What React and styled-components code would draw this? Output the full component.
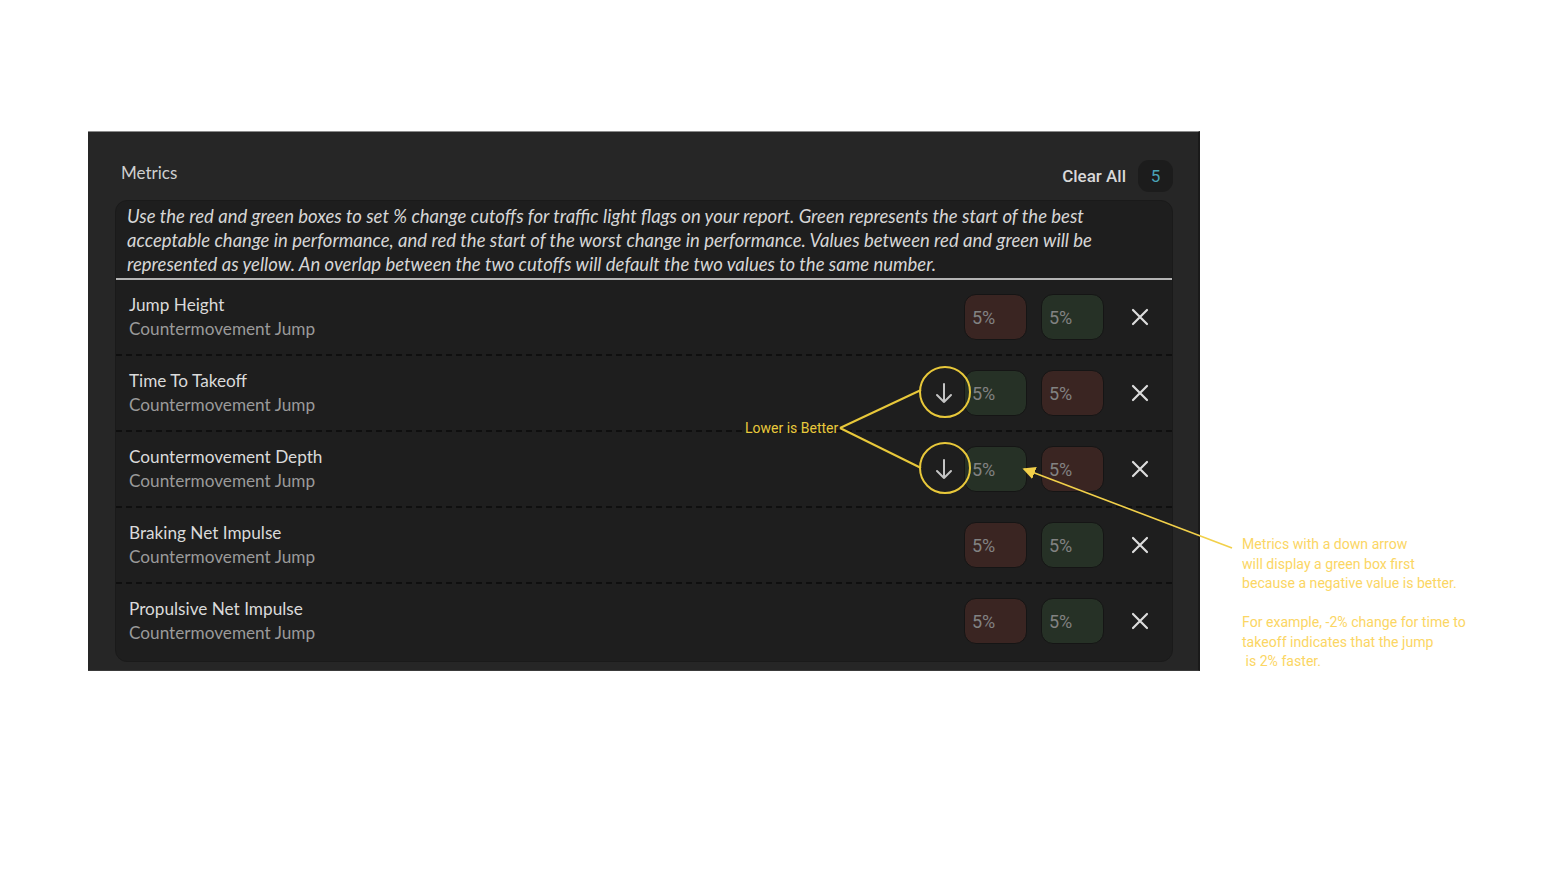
import styled, { createGlobalStyle } from "styled-components";

const GlobalStyle = createGlobalStyle`
  * { box-sizing: border-box; }
  body {
    margin: 0;
    background: #ffffff;
    font-family: Lato, "Open Sans", sans-serif;
  }
`;

const Page = styled.div`
  position: relative;
  width: 1560px;
  height: 877px;
  padding: 131px 0 0 88px;
  background: #ffffff;
  overflow: hidden;
`;

const Panel = styled.section`
  width: 1112px;
  background: #262626;
  border-top: 1px solid #8a8a8a;
  border-right: 2px solid #1a1a1a;
  border-bottom: 1px solid #3a3a3a;
  padding: 0 25px 8px 27px;
`;

const Header = styled.div`
  display: flex;
  align-items: flex-start;
  justify-content: space-between;
  padding-top: 28px;
  margin-bottom: 8px;
`;

const Title = styled.h2`
  margin: 1px 0 0 6px;
  font-size: 17px;
  line-height: 24px;
  font-weight: 400;
  color: #cfcfcf;
`;

const HeaderActions = styled.div`
  display: flex;
  align-items: center;
  gap: 12px;
`;

const ClearButton = styled.button`
  border: none;
  background: none;
  padding: 0;
  font-family: Roboto, "Liberation Sans", sans-serif;
  font-size: 17px;
  font-weight: 500;
  line-height: 32px;
  color: #d8d8d8;
  cursor: pointer;
`;

const Badge = styled.span`
  display: flex;
  align-items: center;
  justify-content: center;
  width: 35px;
  height: 32px;
  border-radius: 11px;
  background: #1c1c1c;
  font-family: Roboto, "Liberation Sans", sans-serif;
  font-size: 17px;
  color: #4aa3b5;
`;

const Card = styled.div`
  background: #1e1e1e;
  border: 1px solid #1a1a1a;
  border-radius: 12px;
  padding-bottom: 3px;
  overflow: hidden;
`;

const Description = styled.p`
  margin: 0;
  padding: 3px 12px 2px 11px;
  border-bottom: 2px solid #b4b4b4;
  font-size: 18.5px;
  line-height: 24px;
  font-style: italic;
  color: #d6d6d6;
  white-space: nowrap;
`;

const Row = styled.div`
  display: flex;
  align-items: center;
  height: ${(p) => (p.$first ? "74px" : "76px")};
  padding: 0 22px 0 13px;
  border-top: ${(p) => (p.$first ? "none" : "2px dashed #0f0f0f")};
`;

const Names = styled.div`
  flex: 1;
  display: flex;
  flex-direction: column;
`;

const MetricName = styled.span`
  font-size: 17.2px;
  line-height: 24px;
  color: #dadada;
`;

const TestName = styled.span`
  font-size: 17.2px;
  line-height: 24px;
  color: #9a9a9a;
`;

const ArrowSlot = styled.div`
  display: flex;
  align-items: center;
  justify-content: center;
  width: 40px;
  height: 46px;
  color: #c4c4c4;
`;

const Cutoff = styled.div`
  display: flex;
  align-items: center;
  width: 63px;
  height: 46px;
  margin-left: ${(p) => (p.$second ? "14px" : "0")};
  padding-left: 7px;
  border-radius: 12px;
  border: 1px solid #151515;
  background: ${(p) => (p.$tone === "red" ? "#3a2522" : "#263126")};
  font-family: Roboto, "Liberation Sans", sans-serif;
  font-size: 18px;
  color: #828282;
`;

const RemoveButton = styled.button`
  display: flex;
  align-items: center;
  justify-content: center;
  width: 20px;
  height: 20px;
  margin-left: 26px;
  padding: 0;
  border: none;
  background: none;
  color: #dcdcdc;
  cursor: pointer;
`;

const Overlay = styled.svg`
  position: absolute;
  top: 0;
  left: 0;
  pointer-events: none;
`;

const CalloutLabel = styled.span`
  position: absolute;
  left: 745px;
  top: 419px;
  font-family: Roboto, "Liberation Sans", sans-serif;
  font-size: 14px;
  line-height: 18px;
  color: #e9c93c;
`;

const Note = styled.div`
  position: absolute;
  left: 1242px;
  top: 535px;
  font-family: Roboto, "Liberation Sans", sans-serif;
  font-size: 14.1px;
  line-height: 19.5px;
  color: #fbd664;
  white-space: pre;
`;

const metrics = [
  { name: "Jump Height", lowerBetter: false },
  { name: "Time To Takeoff", lowerBetter: true },
  { name: "Countermovement Depth", lowerBetter: true },
  { name: "Braking Net Impulse", lowerBetter: false },
  { name: "Propulsive Net Impulse", lowerBetter: false },
];

const CloseIcon = () => (
  <svg width="18" height="18" viewBox="0 0 18 18">
    <path d="M2 2L16 16M16 2L2 16" stroke="currentColor" strokeWidth="2.2" strokeLinecap="round" />
  </svg>
);

const DownArrow = () => (
  <svg width="18" height="22" viewBox="0 0 18 22">
    <path d="M9 2V20M2 13L9 20L16 13" stroke="currentColor" strokeWidth="2" fill="none" strokeLinecap="round" strokeLinejoin="round" />
  </svg>
);

export default function App() {
  return (
    <Page>
      <GlobalStyle />
      <Panel>
        <Header>
          <Title>Metrics</Title>
          <HeaderActions>
            <ClearButton>Clear All</ClearButton>
            <Badge>5</Badge>
          </HeaderActions>
        </Header>
        <Card>
          <Description>
            Use the red and green boxes to set % change cutoffs for traffic light flags on your report. Green represents the start of the best
            <br />
            acceptable change in performance, and red the start of the worst change in performance. Values between red and green will be
            <br />
            represented as yellow. An overlap between the two cutoffs will default the two values to the same number.
          </Description>
          {metrics.map((m, i) => (
            <Row key={m.name} $first={i === 0}>
              <Names>
                <MetricName>{m.name}</MetricName>
                <TestName>Countermovement Jump</TestName>
              </Names>
              {m.lowerBetter && (
                <ArrowSlot>
                  <DownArrow />
                </ArrowSlot>
              )}
              <Cutoff $tone={m.lowerBetter ? "green" : "red"}>5%</Cutoff>
              <Cutoff $tone={m.lowerBetter ? "red" : "green"} $second>
                5%
              </Cutoff>
              <RemoveButton aria-label="Remove">
                <CloseIcon />
              </RemoveButton>
            </Row>
          ))}
        </Card>
      </Panel>

      <Overlay width="1560" height="877" viewBox="0 0 1560 877">
        <defs>
          <marker id="head" markerWidth="8" markerHeight="8" refX="7" refY="4" orient="auto">
            <path d="M0 0L8 4L0 8Z" fill="#f2d04a" />
          </marker>
        </defs>
        <circle cx="945" cy="392" r="25" fill="none" stroke="#e8c83a" strokeWidth="2" />
        <circle cx="945" cy="468" r="25" fill="none" stroke="#e8c83a" strokeWidth="2" />
        <path d="M840 428L921 390M840 428L921 468" stroke="#e8c83a" strokeWidth="2" fill="none" />
        <path d="M1232 548L1024 469" stroke="#f2d04a" strokeWidth="1.6" markerEnd="url(#head)" />
      </Overlay>
      <CalloutLabel>Lower is Better</CalloutLabel>
      <Note>
        {"Metrics with a down arrow\nwill display a green box first\nbecause a negative value is better.\n\nFor example, -2% change for time to\ntakeoff indicates that the jump\n is 2% faster."}
      </Note>
    </Page>
  );
}
